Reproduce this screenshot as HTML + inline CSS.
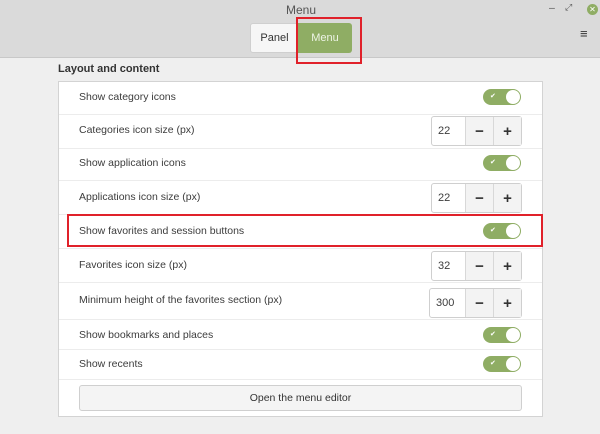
<!DOCTYPE html><html><head><style>
body{margin:0;width:600px;height:434px;background:#efefef;font-family:"Liberation Sans",sans-serif;font-size:10.5px;color:#3c3c3c;position:relative;overflow:hidden}
.hdr{position:absolute;left:0;top:0;width:600px;height:57px;background:#dadada;border-bottom:1px solid #c8c8c8}
.a{position:absolute}
.box{position:absolute;left:58px;top:81px;width:483px;height:334px;background:#fff;border:1px solid #d3d3d3}
.row{position:absolute;left:59px;width:483px;border-top:1px solid #ececec}
.lbl{position:absolute;left:79px;line-height:12px}
.tg{position:absolute;left:483px;width:38px;height:16px;border-radius:8px;background:#8fad64}
.tg:after{content:"";position:absolute;right:1px;top:1px;width:14px;height:14px;border-radius:7px;background:#fff}
.tg:before{content:"✔";position:absolute;left:7px;top:4px;color:#fff;font-size:7px;line-height:8px}
.sp{position:absolute;height:28px;border:1px solid #cfcfcf;border-radius:3px;background:#fff;display:flex;font-size:11px}
.sp div{border-left:1px solid #d8d8d8;background:#f3f3f3;display:flex;align-items:center;justify-content:center;width:27px;font-size:15px;color:#333;font-weight:bold}
.sp span{flex:1;display:flex;align-items:center;padding-left:6px}
</style></head><body>
<div class="hdr"></div>
<div class="a" style="left:286px;top:3px;font-size:12px;color:#555">Menu</div>
<div class="a" style="left:549px;top:2px;color:#555">–</div>
<div class="a" style="left:565px;top:2px;font-size:9px;color:#555">⤢</div>
<div class="a" style="left:587px;top:4px;width:11px;height:11px;border-radius:6px;background:#8fad64;color:#fff;font-size:8px;text-align:center;line-height:11px">✕</div>
<div class="a" style="left:580px;top:26px;font-size:13px;color:#333">≡</div>
<div class="a" style="left:250px;top:23px;width:47px;height:28px;border:1px solid #cfcfcf;border-radius:3px 0 0 3px;background:#f6f6f6;line-height:28px;text-align:center;color:#333;font-size:11px">Panel</div>
<div class="a" style="left:298px;top:23px;width:54px;height:30px;border-radius:0 3px 3px 0;background:#8fad64;line-height:30px;text-align:center;color:#eef4e6;font-size:11px">Menu</div>
<div class="a" style="left:296px;top:17px;width:62px;height:43px;border:2px solid #e0212a"></div>
<div class="a" style="left:58px;top:63px;font-weight:bold;color:#333;font-size:11px">Layout and content</div>
<div class="box"></div>
<div class="row" style="top:114px"></div><div class="row" style="top:148px"></div><div class="row" style="top:180px"></div><div class="row" style="top:214px"></div><div class="row" style="top:248px"></div><div class="row" style="top:282px"></div><div class="row" style="top:319px"></div><div class="row" style="top:349px"></div><div class="row" style="top:379px"></div>
<div class="lbl" style="top:91px">Show category icons</div><div class="tg" style="top:89px"></div>
<div class="lbl" style="top:124px">Categories icon size (px)</div><div class="sp" style="left:431px;top:116px;width:89px"><span>22</span><div>−</div><div>+</div></div>
<div class="lbl" style="top:157px">Show application icons</div><div class="tg" style="top:155px"></div>
<div class="lbl" style="top:191px">Applications icon size (px)</div><div class="sp" style="left:431px;top:183px;width:89px"><span>22</span><div>−</div><div>+</div></div>
<div class="lbl" style="top:225px">Show favorites and session buttons</div><div class="tg" style="top:223px"></div>
<div class="a" style="left:67px;top:214px;width:472px;height:29px;border:2px solid #e0212a"></div>
<div class="lbl" style="top:259px">Favorites icon size (px)</div><div class="sp" style="left:431px;top:251px;width:89px"><span>32</span><div>−</div><div>+</div></div>
<div class="lbl" style="top:294px">Minimum height of the favorites section (px)</div><div class="sp" style="left:429px;top:288px;width:91px"><span>300</span><div>−</div><div>+</div></div>
<div class="lbl" style="top:329px">Show bookmarks and places</div><div class="tg" style="top:327px"></div>
<div class="lbl" style="top:358px">Show recents</div><div class="tg" style="top:356px"></div>
<div class="a" style="left:79px;top:385px;width:441px;height:24px;border:1px solid #cfcfcf;border-radius:3px;background:#f4f4f4;text-align:center;line-height:24px;color:#333">Open the menu editor</div>
</body></html>
